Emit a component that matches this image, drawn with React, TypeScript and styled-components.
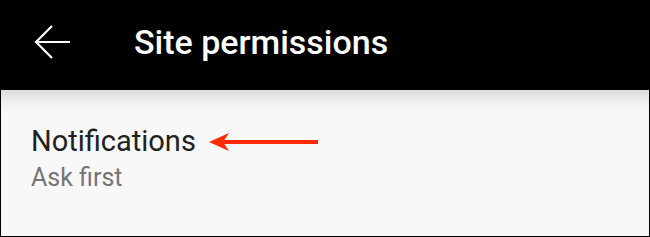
import React from "react";
import styled, { createGlobalStyle } from "styled-components";

const Global = createGlobalStyle`
  html, body { margin: 0; padding: 0; background: #000; }
  * { box-sizing: border-box; }
`;

const Frame = styled.div`
  width: 650px;
  height: 237px;
  border: 1px solid #000;
  border-top: none;
  background: #f8f8f8;
  display: flex;
  flex-direction: column;
  font-family: Roboto, "Noto Sans", sans-serif;
  overflow: hidden;
`;

const Toolbar = styled.header`
  height: 90px;
  background: #000;
  display: flex;
  align-items: center;
  padding: 0 0 6px 32px;
  gap: 62px;
  flex-shrink: 0;
`;

const BackButton = styled.button`
  border: none;
  background: none;
  padding: 0;
  display: flex;
  width: 39px;
  height: 37px;
`;

const Title = styled.h1`
  margin: 0;
  color: #fff;
  font-size: 34px;
  font-weight: 500;
  letter-spacing: 0;
`;

const Content = styled.main`
  flex: 1;
  background: linear-gradient(#dcdcdc 0, #f2f2f2 14px, #f8f8f8 22px);
  padding: 33px 0 0 30px;
`;

const Row = styled.div`
  display: flex;
  align-items: center;
  gap: 13px;
`;

const Label = styled.div`
  color: #212121;
  font-size: 29px;
  line-height: 36px;
`;

const Sub = styled.div`
  color: #757575;
  font-size: 25px;
  line-height: 30px;
  margin-top: 4px;
`;

const Pointer = styled.svg`
  display: block;
  margin-top: 1px;
`;

export default function App() {
  return (
    <>
      <Global />
      <Frame>
        <Toolbar>
          <BackButton aria-label="Back">
            <svg width="39" height="37" viewBox="0 0 39 37" fill="none">
              <path d="M37 18H3M19 2L3 18l16 16" stroke="#fff" strokeWidth="2.2" />
            </svg>
          </BackButton>
          <Title>Site permissions</Title>
        </Toolbar>
        <Content>
          <Row>
            <Label>Notifications</Label>
            <Pointer width="110" height="20" viewBox="0 0 110 20">
              <path d="M0 10L20 1L14 10L20 19Z" fill="#ff2a00" />
              <rect x="13" y="8" width="96" height="4" fill="#ff2a00" />
            </Pointer>
          </Row>
          <Sub>Ask first</Sub>
        </Content>
      </Frame>
    </>
  );
}
